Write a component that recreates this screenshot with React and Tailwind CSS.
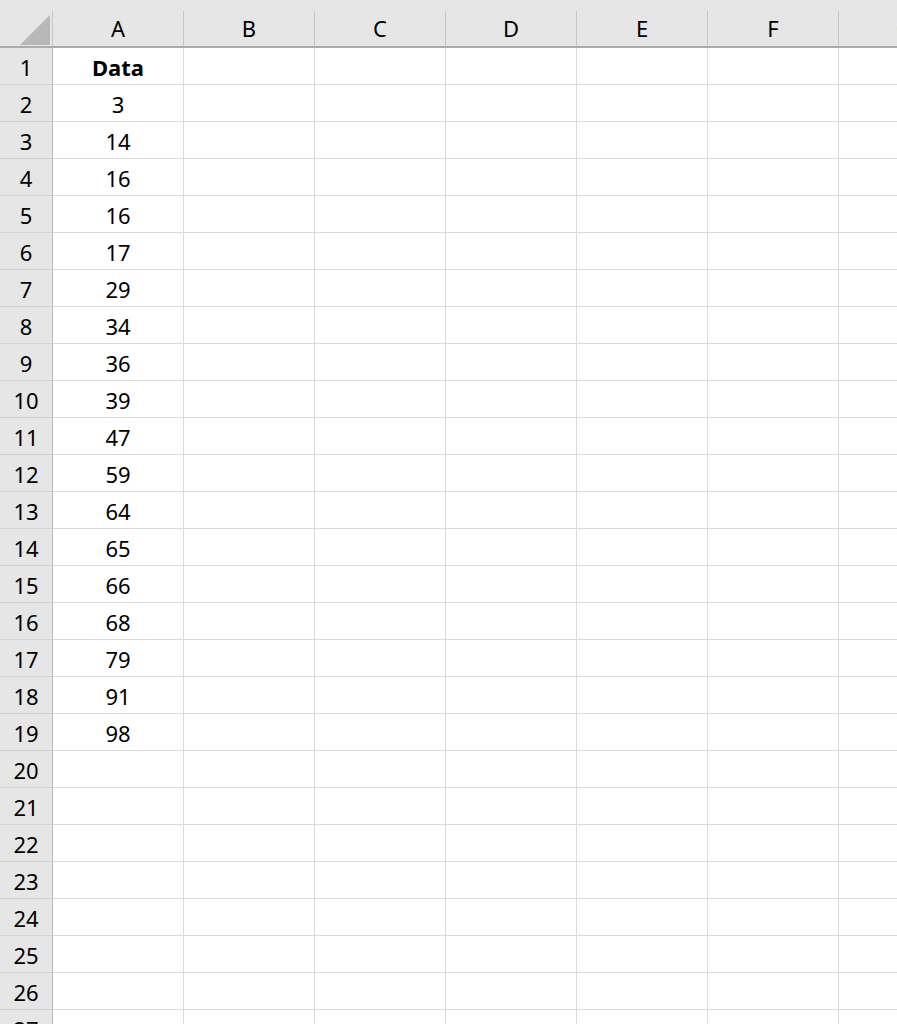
import React from "react";

const cols = ["A", "B", "C", "D", "E", "F", "G"];
const data = ["Data", "3", "14", "16", "16", "17", "29", "34", "36", "39", "47", "59", "64", "65", "66", "68", "79", "91", "98"];

export default function App() {
  const rows = Array.from({ length: 27 }, (_, i) => i + 1);
  return (
    <div
      className="w-[897px] h-[1024px] overflow-hidden bg-white text-[#000000]"
      style={{ fontFamily: '"Noto Sans", "Open Sans", sans-serif' }}
    >
      {/* header */}
      <div className="flex h-[48px] bg-[#e6e6e6] border-b-2 border-[#ababab]">
        <div className="w-[53px] shrink-0 flex flex-col">
          <div className="h-[11px]" />
          <div className="flex-1 border-r border-[#c6c6c6] relative">
            <svg className="absolute left-[20px] top-[4px]" width="30" height="30" viewBox="0 0 30 30">
              <polygon points="30,0 30,30 0,30" fill="#b7b7b7" />
            </svg>
          </div>
        </div>
        {cols.map((c) => (
          <div key={c} className="w-[131px] shrink-0 flex flex-col">
            <div className="h-[11px]" />
            <div className="flex-1 border-r border-[#c6c6c6] flex items-center justify-center text-[22px] leading-none pb-[1px]">
              {c}
            </div>
          </div>
        ))}
      </div>
      {rows.map((r) => (
        <div key={r} className="flex h-[37px]">
          <div className="w-[53px] shrink-0 bg-[#e6e6e6] border-r border-b border-r-[#b9b9b9] border-b-[#d2d2d2] flex items-center justify-center text-[22px] leading-none pt-[2px]">
            {r}
          </div>
          {cols.map((c, ci) => (
            <div
              key={c}
              className={
                "w-[131px] shrink-0 border-r border-b border-[#dadada] flex items-center justify-center text-[22px] leading-none pt-[2px] " +
                (ci === 0 && r === 1 ? "font-bold" : "")
              }
            >
              {ci === 0 && r <= data.length ? data[r - 1] : ""}
            </div>
          ))}
        </div>
      ))}
    </div>
  );
}
